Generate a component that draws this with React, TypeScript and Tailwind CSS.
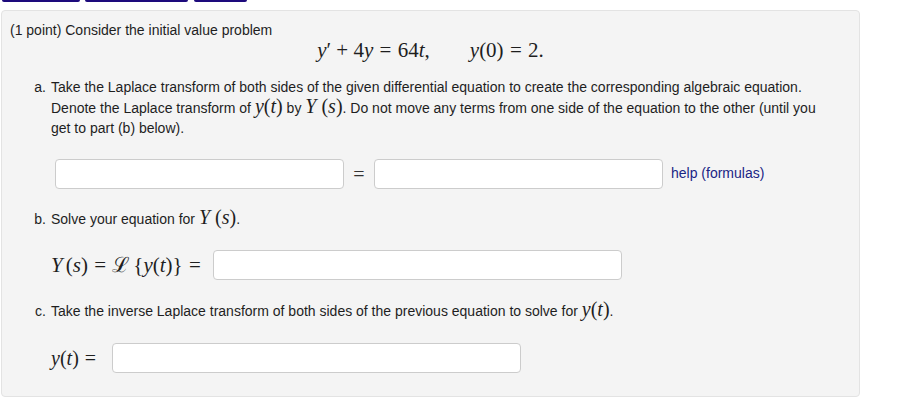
import React from "react";

const M = ({ children, className = "" }: { children: React.ReactNode; className?: string }) => (
  <span className={`font-['Liberation_Serif',serif] whitespace-nowrap ${className}`}>{children}</span>
);
const I = ({ children }: { children: React.ReactNode }) => <i>{children}</i>;
const Bin = ({ children }: { children: React.ReactNode }) => (
  <span className="mx-[0.25em]">{children}</span>
);
const Rel = ({ children }: { children: React.ReactNode }) => (
  <span className="mx-[0.3em]">{children}</span>
);

const Input = ({ w }: { w: string }) => (
  <div className={`${w} h-[30px] bg-white border border-[#cccccc] rounded-[4px]`} />
);

export default function App() {
  return (
    <div className="w-[909px] h-[418px] bg-white font-['Liberation_Sans',Arial,sans-serif] text-[14px] text-[#1e1e1e] relative">
      <div className="flex h-[10px] items-start">
        <div className="ml-[2px] w-[78px] h-[2px] bg-[#1d0a7c] rounded-b-[3px]" />
        <div className="ml-[5px] w-[103px] h-[2px] bg-[#1d0a7c] rounded-b-[3px]" />
        <div className="ml-[6px] w-[53px] h-[2px] bg-[#1d0a7c] rounded-b-[3px]" />
      </div>
      <div className="ml-[1px] w-[859px] bg-[#f4f4f4] border border-[#e3e3e3] rounded-[4px] pl-[8px] pr-[8px] pt-[9px] pb-[23px]">
        <div className="leading-[20px]">(1 point) Consider the initial value problem</div>
        <div className="h-[20px] flex justify-center items-center text-[21px] leading-[20px]">
          <M>
            <I>y</I>′<Bin>+</Bin>4<I>y</I><Rel>=</Rel>64<I>t</I>,
            <span className="inline-block w-[40px]" />
            <I>y</I>(0)<Rel>=</Rel>2.
          </M>
        </div>
        <div className="flex mt-[17px] leading-[20.5px]">
          <div className="w-[41px] text-right pr-[5px]">a.</div>
          <div className="w-[782px]">
            Take the Laplace transform of both sides of the given differential equation to create the corresponding algebraic equation. Denote the Laplace transform of{" "}
            <M className="text-[20px] leading-[10px]"><I>y</I>(<I>t</I>)</M> by{" "}
            <M className="text-[20px] leading-[10px]"><I>Y</I> (<I>s</I>)</M>. Do not move any terms from one side of the equation to the other (until you get to part (b) below).
          </div>
        </div>
        <div className="flex items-center mt-[20px] ml-[45px]">
          <Input w="w-[289px]" />
          <M className="w-[30px] text-center text-[20px] text-[#333]">=</M>
          <Input w="w-[289px]" />
          <a className="ml-[8px] text-[#1a2585]">help (formulas)</a>
        </div>
        <div className="flex mt-[20px] leading-[20px]">
          <div className="w-[41px] text-right pr-[5px]">b.</div>
          <div>
            Solve your equation for <M className="text-[20px] leading-[10px]"><I>Y</I> (<I>s</I>)</M>.
          </div>
        </div>
        <div className="flex items-center mt-[21px] ml-[41px]">
          <M className="text-[21px]">
            <I>Y</I><span className="ml-[3px]">(</span><I>s</I>)<Rel>=</Rel>ℒ<span className="ml-[3px]">{"{"}</span><I>y</I>(<I>t</I>){"}"}<Rel>=</Rel>
          </M>
          <div className="ml-[6px]"><Input w="w-[409px]" /></div>
        </div>
        <div className="flex mt-[20px] leading-[20px]">
          <div className="w-[41px] text-right pr-[5px]">c.</div>
          <div>
            Take the inverse Laplace transform of both sides of the previous equation to solve for{" "}
            <M className="text-[20px] leading-[10px]"><I>y</I>(<I>t</I>)</M>.
          </div>
        </div>
        <div className="flex items-center mt-[22px] ml-[41px]">
          <M className="text-[20px]">
            <I>y</I>(<I>t</I>)<Rel>=</Rel>
          </M>
          <div className="ml-[10px]"><Input w="w-[409px]" /></div>
        </div>
      </div>
    </div>
  );
}
